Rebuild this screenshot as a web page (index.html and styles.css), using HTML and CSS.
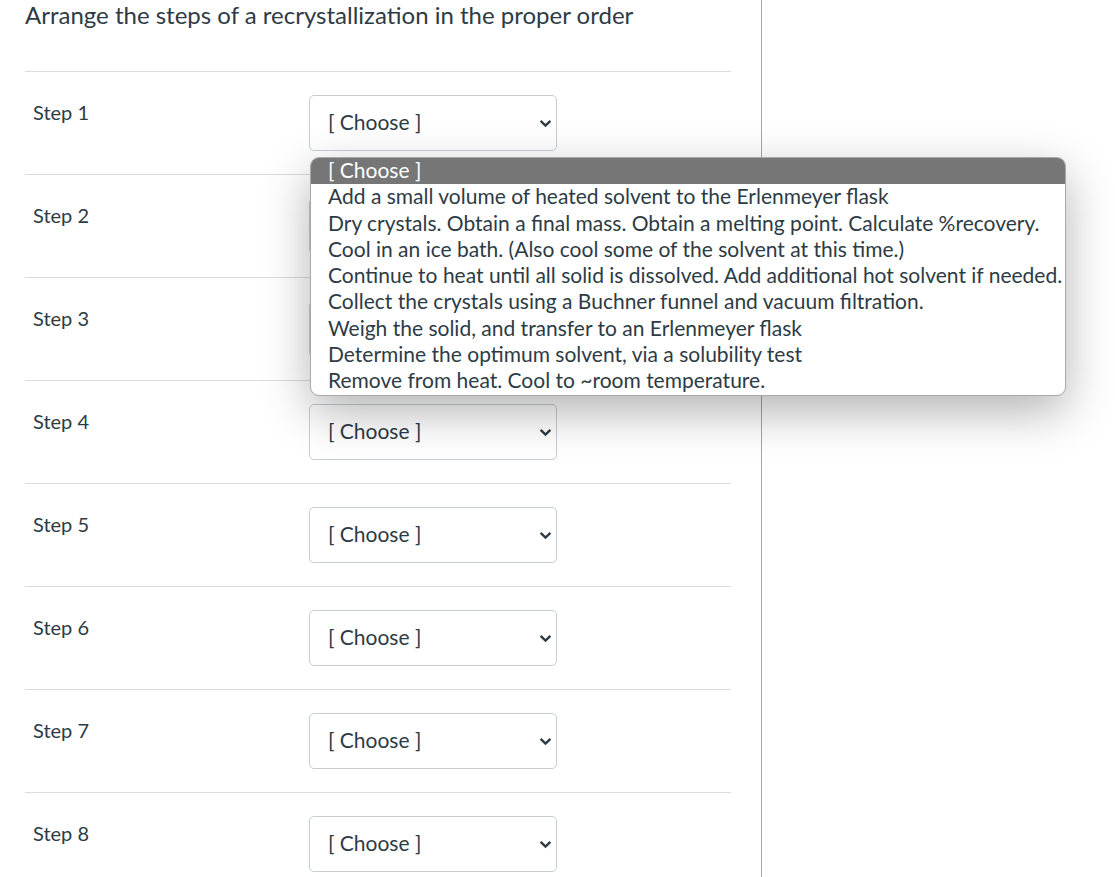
FILE: index.html
```html
<!DOCTYPE html>
<html>
<head>
<title>Recrystallization Order</title>
<meta name="viewport" content="width=device-width, initial-scale=1.0">
<link rel="stylesheet" href="styles.css">
</head>
<body>

<div class="main">
    <h2 class="question">Arrange the steps of a recrystallization in the proper order</h2>

    <div class="answers">
        <div class="row">
            <div class="label">Step 1</div>
            <div class="pick">
                <div class="select"><span>[ Choose ]</span><svg class="chev" viewBox="0 0 12 8"><path d="M1.5 1.5 L6 6 L10.5 1.5" /></svg></div>
                <div class="popup">
                    <div class="opt on">[ Choose ]</div>
                    <div class="opt">Add a small volume of heated solvent to the Erlenmeyer flask</div>
                    <div class="opt">Dry crystals. Obtain a final mass. Obtain a melting point. Calculate %recovery.</div>
                    <div class="opt">Cool in an ice bath. (Also cool some of the solvent at this time.)</div>
                    <div class="opt">Continue to heat until all solid is dissolved. Add additional hot solvent if needed.</div>
                    <div class="opt">Collect the crystals using a Buchner funnel and vacuum filtration.</div>
                    <div class="opt">Weigh the solid, and transfer to an Erlenmeyer flask</div>
                    <div class="opt">Determine the optimum solvent, via a solubility test</div>
                    <div class="opt">Remove from heat. Cool to ~room temperature.</div>
                </div>
            </div>
        </div>
        <div class="row">
            <div class="label">Step 2</div>
            <div class="pick"><div class="select"><span>[ Choose ]</span><svg class="chev" viewBox="0 0 12 8"><path d="M1.5 1.5 L6 6 L10.5 1.5" /></svg></div></div>
        </div>
        <div class="row">
            <div class="label">Step 3</div>
            <div class="pick"><div class="select"><span>[ Choose ]</span><svg class="chev" viewBox="0 0 12 8"><path d="M1.5 1.5 L6 6 L10.5 1.5" /></svg></div></div>
        </div>
        <div class="row">
            <div class="label">Step 4</div>
            <div class="pick"><div class="select"><span>[ Choose ]</span><svg class="chev" viewBox="0 0 12 8"><path d="M1.5 1.5 L6 6 L10.5 1.5" /></svg></div></div>
        </div>
        <div class="row">
            <div class="label">Step 5</div>
            <div class="pick"><div class="select"><span>[ Choose ]</span><svg class="chev" viewBox="0 0 12 8"><path d="M1.5 1.5 L6 6 L10.5 1.5" /></svg></div></div>
        </div>
        <div class="row">
            <div class="label">Step 6</div>
            <div class="pick"><div class="select"><span>[ Choose ]</span><svg class="chev" viewBox="0 0 12 8"><path d="M1.5 1.5 L6 6 L10.5 1.5" /></svg></div></div>
        </div>
        <div class="row">
            <div class="label">Step 7</div>
            <div class="pick"><div class="select"><span>[ Choose ]</span><svg class="chev" viewBox="0 0 12 8"><path d="M1.5 1.5 L6 6 L10.5 1.5" /></svg></div></div>
        </div>
        <div class="row">
            <div class="label">Step 8</div>
            <div class="pick"><div class="select"><span>[ Choose ]</span><svg class="chev" viewBox="0 0 12 8"><path d="M1.5 1.5 L6 6 L10.5 1.5" /></svg></div></div>
        </div>
    </div>
</div>

</body>
</html>
```

FILE: styles.css
```css
body { margin: 0; font-family: Lato, "Open Sans", sans-serif; color: #2d3b45; background-color: #fff; overflow: hidden; }
.main { width: 762px; min-height: 877px; border-right: 1px solid #a6a6a6; box-sizing: border-box; padding-left: 25px; }
.question { font-size: 24px; font-weight: normal; margin: 0; padding-top: 1px; height: 70px; line-height: 28px; }
.answers { width: 706px; }
.row { display: flex; height: 102px; border-top: 1px solid #dcdcdc; }
.label { width: 276px; padding-left: 8px; padding-top: 28px; font-size: 20px; }
.pick { position: relative; padding-top: 23px; }
.select { width: 248px; height: 56px; box-sizing: border-box; border: 1px solid #c7cdd1; border-radius: 5px; display: flex; align-items: center; justify-content: space-between; padding: 0 4px 3px 18px; font-size: 21px; background-color: #fff; }
.select .chev { margin-top: 3px; }
.chev { width: 13px; height: 9px; fill: none; stroke: #2d3b45; stroke-width: 2.2; }
.popup { position: absolute; left: 1px; top: 85px; width: 756px; box-sizing: border-box; background-color: #fff; border: 1px solid #a9a9a9; border-radius: 9px; overflow: hidden; box-shadow: 0 16px 48px rgba(0, 0, 0, 0.3); z-index: 5; }
.opt { font-size: 21px; line-height: 23.5px; height: 26.3px; padding-bottom: 2.8px; box-sizing: border-box; padding-left: 17px; white-space: nowrap; }
.opt.on { background-color: #767676; color: #fff; }
```
